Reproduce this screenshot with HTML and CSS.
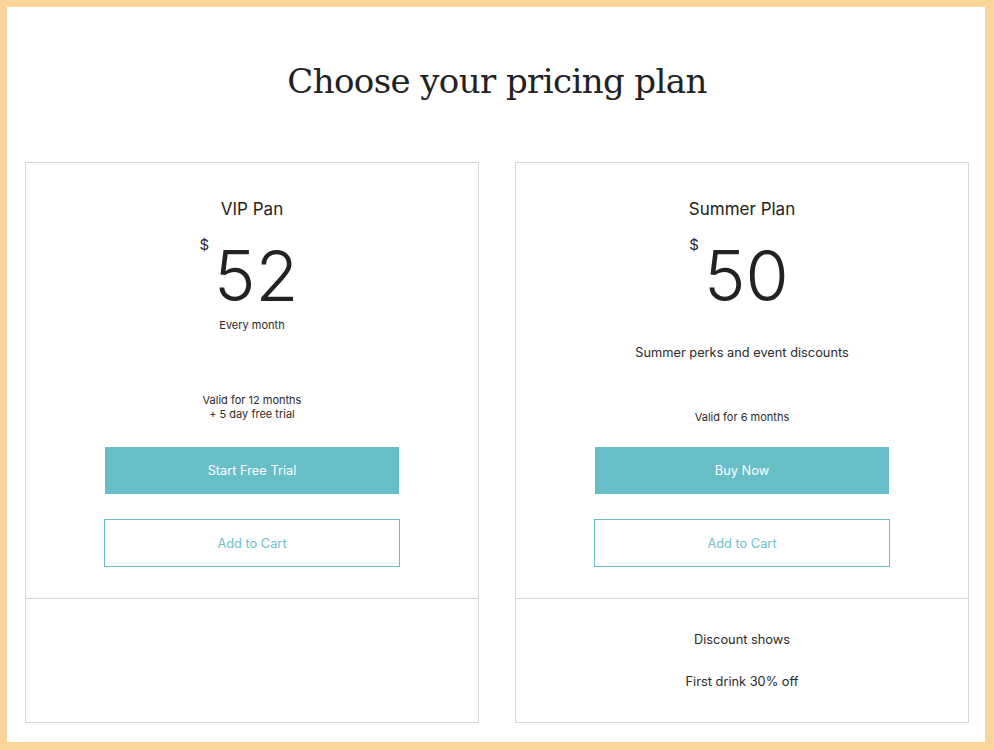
FILE: index.html
```html
<!DOCTYPE html>
<html lang="en">
<head>
<meta charset="utf-8">
<title>Choose your pricing plan</title>
<link rel="stylesheet" href="styles.css">
</head>
<body>
<div class="frame">
  <h1 class="page-title">Choose your pricing plan</h1>
  <div class="plans">
    <section class="plan">
      <div class="plan-main">
        <h2 class="plan-name">VIP Pan</h2>
        <div class="price"><span class="currency">$</span><span class="amount">52</span></div>
        <div class="middle">
          <p class="period">Every month</p>
          <p class="desc"></p>
          <p class="valid">Valid for 12 months<br>+ 5 day free trial</p>
        </div>
        <button class="btn btn-primary">Start Free Trial</button>
        <button class="btn btn-outline">Add to Cart</button>
      </div>
      <div class="plan-extra"></div>
    </section>
    <section class="plan">
      <div class="plan-main">
        <h2 class="plan-name">Summer Plan</h2>
        <div class="price"><span class="currency">$</span><span class="amount">50</span></div>
        <div class="middle">
          <p class="period"></p>
          <p class="desc">Summer perks and event discounts</p>
          <p class="valid valid-single">Valid for 6 months</p>
        </div>
        <button class="btn btn-primary">Buy Now</button>
        <button class="btn btn-outline">Add to Cart</button>
      </div>
      <div class="plan-extra">
        <p class="extra-line">Discount shows</p>
        <p class="extra-line">First drink 30% off</p>
      </div>
    </section>
  </div>
</div>
</body>
</html>
```

FILE: styles.css
```css
* { box-sizing: border-box; }
html, body { margin: 0; padding: 0; }
body { background: #fff; font-family: "Inter", "Lato", sans-serif; color: #2a2a2a; }

.frame {
  width: 994px;
  height: 750px;
  border-style: solid;
  border-color: #fbd49a;
  border-width: 7px 9px 8px 7px;
  background: #fff;
  padding: 0 16px 0 18px;
}

.page-title {
  margin: 0;
  padding-top: 54px;
  height: 155px;
  text-align: center;
  font-family: "DejaVu Serif", "Liberation Serif", serif;
  font-weight: normal;
  font-size: 34px;
  letter-spacing: -0.6px;
  line-height: 40px;
  color: #222;
}

.plans {
  display: grid;
  grid-template-columns: 454px 454px;
  column-gap: 36px;
}

.plan {
  border: 1px solid #d6d6d6;
  height: 561px;
  display: flex;
  flex-direction: column;
}

.plan-main {
  height: 436px;
  border-bottom: 1px solid #d6d6d6;
  display: flex;
  flex-direction: column;
  align-items: center;
  padding-top: 34px;
}

.plan-name {
  margin: 0;
  font-weight: 400;
  font-size: 17px;
  line-height: 24px;
  color: #222;
}

.price {
  display: flex;
  align-items: flex-start;
  margin-top: 12px;
  margin-left: -6px;
  height: 84px;
}
.currency {
  font-size: 15px;
  line-height: 20px;
  font-weight: 400;
  margin-top: 2px;
  margin-right: 5px;
}
.amount {
  font-size: 70px;
  line-height: 78px;
  margin-top: 4px;
  font-weight: 350;
  color: #222;
}

.middle {
  display: flex;
  flex-direction: column;
  align-items: center;
  height: 104px;
  width: 100%;
  text-align: center;
}
.period {
  margin: 0;
  font-size: 11px;
  line-height: 16px;
  height: 16px;
}
.desc {
  margin: 11px 0 0;
  font-size: 12.8px;
  line-height: 18px;
}
.valid {
  margin: auto 0 0;
  font-size: 11px;
  line-height: 14px;
}
.valid-single { margin-bottom: -3px; }

.btn {
  font-family: "Inter", "Lato", sans-serif;
  font-size: 12.8px;
  font-weight: 400;
  cursor: pointer;
}
.btn-primary {
  margin-top: 26px;
  width: 294px;
  height: 47px;
  border: none;
  background: #68bec7;
  color: #fff;
}
.btn-outline {
  margin-top: 25px;
  width: 296px;
  height: 48px;
  border: 1px solid #68bec7;
  background: #fff;
  color: #6dc1ca;
}

.plan-extra {
  flex: 1;
  display: flex;
  flex-direction: column;
  align-items: center;
  padding-top: 32px;
  gap: 24px;
}
.extra-line {
  margin: 0;
  font-size: 12.8px;
  line-height: 18px;
}
```
